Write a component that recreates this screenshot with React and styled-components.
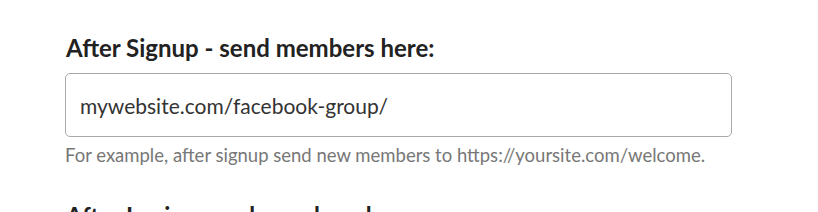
import React from "react";
import styled, { createGlobalStyle } from "styled-components";

const Global = createGlobalStyle`
  html, body { margin: 0; padding: 0; background: #fff; }
  body { font-family: Lato, "Open Sans", sans-serif; }
`;

const Page = styled.div`
  padding: 33px 86px 0 65px;
  display: flex;
  flex-direction: column;
`;

const Field = styled.div`
  display: flex;
  flex-direction: column;
  margin-bottom: ${(p) => p.$gap || 0}px;
`;

const Label = styled.label`
  font-size: 24px;
  line-height: 29px;
  font-weight: 700;
  color: #222;
  margin-left: 1px;
  margin-bottom: 11px;
`;

const Input = styled.input`
  box-sizing: border-box;
  width: 667px;
  height: 64px;
  border: 1px solid #a9a9a9;
  border-radius: 5px;
  padding: 0 14px;
  font-family: Lato, sans-serif;
  font-size: 21px;
  color: #333;
  outline: none;
`;

const Help = styled.div`
  font-size: 18.5px;
  line-height: 22px;
  color: #777;
  margin-top: 7px;
`;

export default function App() {
  return (
    <>
      <Global />
      <Page>
        <Field $gap={35}>
          <Label>After Signup - send members here:</Label>
          <Input defaultValue="mywebsite.com/facebook-group/" />
          <Help>For example, after signup send new members to https://yoursite.com/welcome.</Help>
        </Field>
        <Field>
          <Label>After Login - send members here:</Label>
        </Field>
      </Page>
    </>
  );
}
